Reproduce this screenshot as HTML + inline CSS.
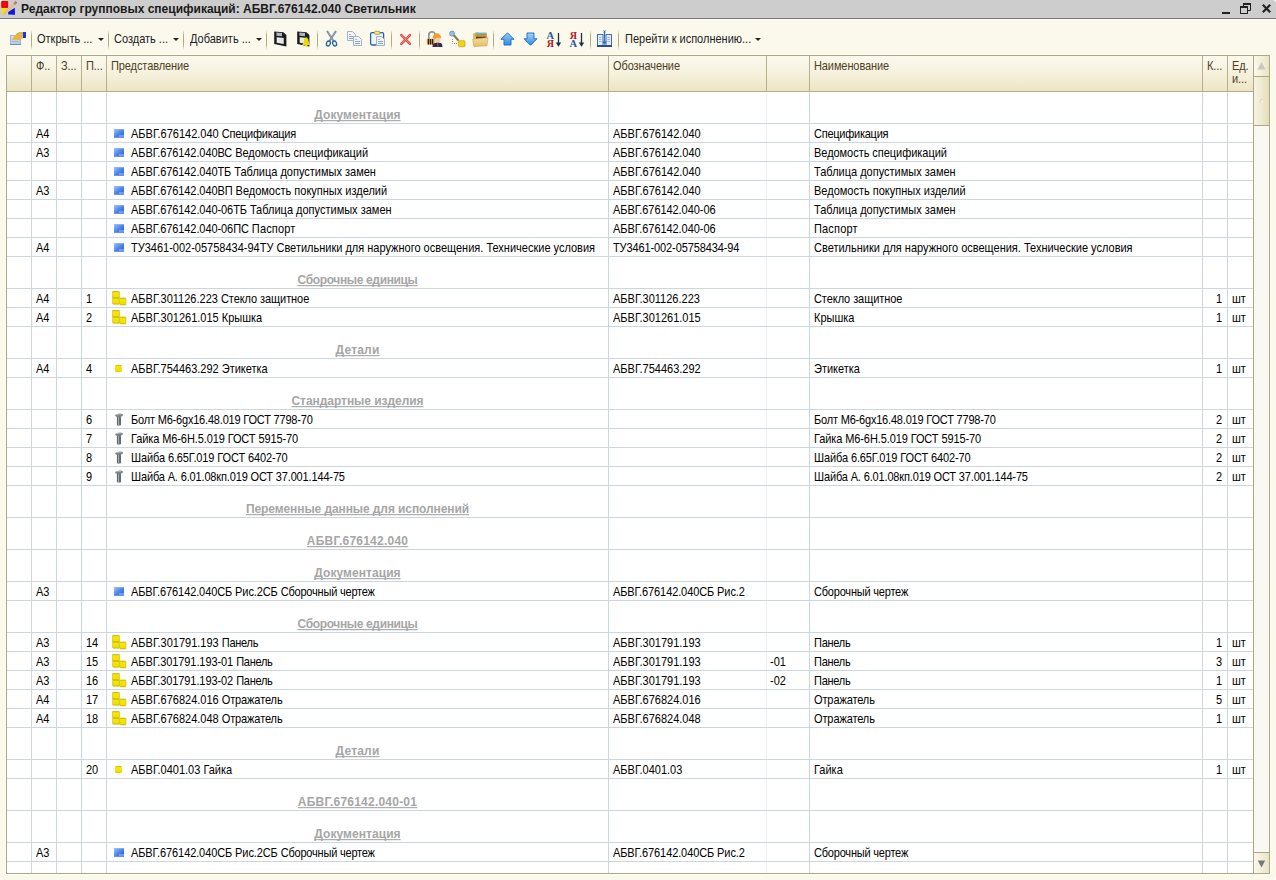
<!DOCTYPE html>
<html lang="ru"><head><meta charset="utf-8"><title>Редактор групповых спецификаций</title>
<style>
html,body{margin:0;padding:0;}
body{width:1276px;height:880px;overflow:hidden;position:relative;background:#fff;font-family:"Liberation Sans",Arial,sans-serif;font-size:11px;color:#000;}
#win{position:absolute;left:0;top:0;width:1276px;height:880px;background:#fbf9ec;border-radius:4px;overflow:hidden;}
#title{position:absolute;left:0;top:0;width:1276px;height:18px;background:#cdcdcd;border-bottom:1px solid #767676;}
#title .t{position:absolute;left:21px;top:2px;font-weight:bold;font-size:12px;line-height:14px;letter-spacing:0;color:#1a1a1a;white-space:nowrap;}
#lt{position:absolute;left:0;top:19px;width:1276px;height:1px;background:#fffef4;}
.tbt{position:absolute;top:33px;font-size:11px;line-height:13px;color:#222;white-space:nowrap;}
.sep{position:absolute;top:30px;width:1px;height:20px;background:linear-gradient(rgba(176,168,128,0),#b5ad86 25%,#b0a880 50%,#b5ad86 75%,rgba(176,168,128,0));}
.arr{position:absolute;top:38px;width:0;height:0;border-left:3px solid transparent;border-right:3px solid transparent;border-top:3px solid #222;}
#grid{position:absolute;left:6px;top:55px;width:1262px;height:817px;background:#fff;border:1px solid #aea784;overflow:hidden;box-shadow:0 0 0 1px #fffef3;}
#hdr{position:absolute;left:0;top:0;width:1246px;height:35px;background:linear-gradient(#fbf9ee 0%,#f6f2df 45%,#ece5c4 100%);border-bottom:1px solid #b6ae89;}
.hc{position:absolute;top:0;height:35px;width:1px;background:#b7b08d;}
.ht{position:absolute;top:4px;letter-spacing:-0.1px;font-size:11px;color:#4d401f;white-space:nowrap;line-height:13px;}
.vl{position:absolute;top:36px;width:1px;height:782px;background:#cdd6dd;}
.hl{position:absolute;left:0;width:1246px;height:1px;background:#cdd6dd;}
.c,.ht,.tbt{transform:scaleY(1.125);transform-origin:0 10px;}
.c{position:absolute;white-space:nowrap;font-size:11px;line-height:13px;color:#000;}
.sec{position:absolute;font-weight:bold;color:#a6a6a6;text-decoration:underline;text-decoration-skip-ink:none;text-underline-offset:0.5px;text-decoration-thickness:1px;transform:scaleY(1.1);transform-origin:0 11px;font-size:12px;line-height:14px;letter-spacing:0.05px;white-space:nowrap;text-align:center;}
.ic{position:absolute;}
#sb{position:absolute;left:1246px;top:0;width:15px;height:817px;background:#f9f8f2;border-left:1px solid #aea784;}
.sbb{position:absolute;left:0;width:15px;background:linear-gradient(90deg,#faf8ec,#f3efd9 50%,#e9e3c4);}
</style></head><body><div id="win">

<div id="title"><svg style="position:absolute;left:0;top:0" width="20" height="18" viewBox="0 0 20 18"><rect x="1.2" y="1" width="7" height="7" rx="0.8" fill="#e80808"/><rect x="1.700" y="8" width="6" height="5.700" fill="#f6de12"/><polygon points="8.200,14.600 8.200,12 14.800,7.800 15,14.800" fill="#0a18e8"/><polygon points="2.300,15.600 3.600,12.600 13.600,3 15.300,4.700 5.200,14.800" fill="#e3bd84"/><polygon points="13.400,3.200 14.600,2 16.300,3.700 15.200,4.900" fill="#8c8c8c"/><polygon points="14.600,2 15.600,1 17.200,2.600 16.300,3.700" fill="#ea4a4a"/></svg><span class="t">Редактор групповых спецификаций: АБВГ.676142.040 Светильник</span>
<svg style="position:absolute;left:1216px;top:0" width="60" height="18" viewBox="1216 0 60 18"><rect x="1222" y="12" width="8" height="2" fill="#222"/><path d="M1243.500 6 V4 H1250.500 V10.500 H1248" fill="none" stroke="#222" stroke-width="1"/><rect x="1243" y="3" width="8" height="2" fill="#222"/><rect x="1240.500" y="7" width="7" height="6.500" fill="none" stroke="#222" stroke-width="1"/><rect x="1240" y="6" width="8" height="2" fill="#222"/><path d="M1262.800 4.800 L1270.200 12.200 M1270.200 4.800 L1262.800 12.200" stroke="#222" stroke-width="2.200"/></svg></div><div id="lt"></div>
<div id="tb">
<span class="tbt" style="left:37px">Открыть ...</span><i class="arr" style="left:98px"></i>
<span class="tbt" style="left:114px">Создать ...</span><i class="arr" style="left:173px"></i>
<span class="tbt" style="left:190px">Добавить ...</span><i class="arr" style="left:256px"></i>
<span class="tbt" style="left:625px">Перейти к исполнению...</span><i class="arr" style="left:755px"></i>
<i class="sep" style="left:31px"></i>
<i class="sep" style="left:108px"></i>
<i class="sep" style="left:183px"></i>
<i class="sep" style="left:266px"></i>
<i class="sep" style="left:317px"></i>
<i class="sep" style="left:391px"></i>
<i class="sep" style="left:419px"></i>
<i class="sep" style="left:493px"></i>
<i class="sep" style="left:590px"></i>
<i class="sep" style="left:618px"></i>
<svg id="tbi" style="position:absolute;left:0;top:0" width="640" height="55" viewBox="0 0 640 55">
<defs>
<linearGradient id="gup" x1="0" y1="0" x2="0" y2="1"><stop offset="0" stop-color="#9ccdf6"/><stop offset="1" stop-color="#2f8ae2"/></linearGradient>
<linearGradient id="gdn" x1="0" y1="0" x2="0" y2="1"><stop offset="0" stop-color="#a6d2f7"/><stop offset="1" stop-color="#2f8ae2"/></linearGradient>
<linearGradient id="gwin" x1="0" y1="0" x2="0" y2="1"><stop offset="0" stop-color="#d7e0f8"/><stop offset="1" stop-color="#b7c6ee"/></linearGradient>
<linearGradient id="gfold" x1="0" y1="0" x2="0" y2="1"><stop offset="0" stop-color="#f6dc9a"/><stop offset="1" stop-color="#e3bd6b"/></linearGradient>
</defs>
<!-- hand / window -->
<rect x="10.5" y="35.5" width="10" height="9" fill="url(#gwin)" stroke="#a3b1d6"/>
<rect x="10" y="44" width="11" height="1" fill="#7d8cab"/>
<rect x="12" y="41" width="7" height="1" fill="#a6b5dd"/>
<path d="M11.700 39.500 L16.500 33.800 L19 32.600 L23 32.400 L23 38 L19.500 40 L17.500 40.300 L16 39.300 L13 40.500 Z" fill="#e6b83a"/>
<path d="M16.500 34 L19 32.800 L22.800 32.600" stroke="#b89a4a" stroke-width="0.700" fill="none"/>
<rect x="23" y="32" width="3" height="6" fill="#1b36e4"/>
<!-- save -->
<g id="flop"><path d="M274.200 31.600 L283.400 32.200 L286.400 34.900 L286.400 46.400 L274.200 43.900 Z" fill="#1c1c1c"/>
<path d="M276.400 32.500 L282 32.900 L282 36.200 L276.400 35.800 Z" fill="#aeb7b7"/>
<path d="M276.700 37.200 L283.700 38 L283.700 44 L276.700 42.700 Z" fill="#eeeeee"/>
<path d="M279 37.500 L279 43.100 M281.300 37.800 L281.300 43.500" stroke="#d4d4d4" stroke-width="0.600"/></g>
<use href="#flop" x="23" y="0"/>
<path d="M305.200 37.800 Q306.200 36.800 307.200 37.800 Q308.800 39 308.800 42 L310.400 45 L302.200 45 L303.700 42 Q303.700 39 305.200 37.800 Z" fill="#e9da0a"/>
<rect x="305" y="45" width="2.500" height="1.500" fill="#e9da0a"/>
<!-- scissors -->
<path d="M327 31 L333.800 41.500 M336 31 L329.200 41.500" stroke="#6a8399" stroke-width="1.900" fill="none"/><path d="M327.300 31.500 L333.300 41 M335.700 31.500 L329.700 41" stroke="#a9bccb" stroke-width="0.600" fill="none"/>
<ellipse cx="328.400" cy="43.500" rx="1.900" ry="2.500" fill="none" stroke="#1f64a6" stroke-width="1.300" transform="rotate(20 328.400 43.500)"/>
<ellipse cx="334.600" cy="43.500" rx="1.900" ry="2.500" fill="none" stroke="#1f64a6" stroke-width="1.300" transform="rotate(-20 334.600 43.500)"/>
<!-- copy -->
<g id="dpage"><path d="M347.500 31.500 L352.500 31.500 L355.500 34.500 L355.500 40.500 L347.500 40.500 Z" fill="#f0f4fc" stroke="#9fb5c6"/>
<path d="M349 36.500 H354 M349 38.500 H354" stroke="#8ea3cc" stroke-width="1"/><rect x="349" y="34" width="2" height="1" fill="#d9a9a0"/></g>
<use href="#dpage" x="6" y="5"/>
<!-- paste -->
<rect x="370.600" y="32.600" width="13" height="12.400" rx="1.500" fill="#f1f4fa" stroke="#2b5ea8" stroke-width="1.300"/>
<rect x="374.500" y="31.300" width="5.400" height="3" rx="1" fill="#f6ea78" stroke="#a48d2e" stroke-width="0.800"/>
<use href="#dpage" x="29" y="5"/>
<!-- delete -->
<path d="M401.300 35.200 L410 43.800 M410 35.200 L401.300 43.800" stroke="#df433d" stroke-width="2.500" stroke-linecap="round"/>
<path d="M401.300 35.200 L410 43.800 M410 35.200 L401.300 43.800" stroke="#f0a09b" stroke-width="0.800" stroke-linecap="round"/>
<!-- lock + person -->
<path d="M428.800 39 V35 a3.200 3.200 0 0 1 6.400 0 V39" fill="none" stroke="#8e949a" stroke-width="1.700"/>
<rect x="426.800" y="38.800" width="7.800" height="5.800" rx="0.800" fill="#d99a34"/>
<path d="M428.500 39 V44.500 M430.500 39 V44.500 M432.500 39 V44.500" stroke="#2a2418" stroke-width="1.200"/>
<path d="M432.600 38.300 a4.300 5 0 0 1 8.600 0 Z" fill="#f0a02c"/>
<ellipse cx="437.700" cy="40.300" rx="2.600" ry="2.600" fill="#f3cda8"/>
<path d="M432.400 47 L433 44 Q435 42.500 437.700 42.800 Q440.600 42.500 442 44 L442.500 47 Z" fill="#27304f"/>
<path d="M437.200 43 H438.400 V46.500 H437.200 Z" fill="#d33"/>
<!-- magnifier + cube -->
<circle cx="452.100" cy="33.600" r="2.500" fill="#8fc0ee" stroke="#6b95c6" stroke-width="0.900"/>
<path d="M454.200 35.800 L458 40" stroke="#857866" stroke-width="2.200" stroke-linecap="round"/>
<path d="M452 39h1v1h-1z M452 41h1v1h-1z M452 43h1v1h-1z M454 43h1v1h-1z M456 43h1v1h-1z" fill="#8c8c8c"/>
<rect x="458.500" y="40.700" width="6.500" height="6" rx="1" fill="#f0d21c" stroke="#cdab0d" stroke-width="0.800"/>
<!-- folder -->
<path d="M473 33.500 L477.500 32 L480 33.500 L487 33 L487 45 L473.500 46 Z" fill="#dcb968"/>
<rect x="475.500" y="32.500" width="11" height="2" fill="#8db3d8"/>
<rect x="475.500" y="33.800" width="11" height="1.700" fill="#6fae5a"/>
<rect x="475.500" y="35.300" width="11" height="1.700" fill="#e8853a"/>
<rect x="476" y="36.800" width="10.500" height="2" fill="#4a3a24"/>
<path d="M472.600 39.200 L488 37.600 L487 45.800 L474 46.600 Z" fill="url(#gfold)" stroke="#c9a55a" stroke-width="0.600"/>
<!-- up / down -->
<path d="M507.500 32.800 L514 39.300 L511 39.300 L511 45 L504 45 L504 39.300 L501 39.300 Z" fill="url(#gup)" stroke="#2573c6" stroke-width="1" stroke-linejoin="round"/>
<path d="M530.500 45.300 L524 38.800 L527 38.800 L527 33 L534 33 L534 38.800 L537 38.800 Z" fill="url(#gdn)" stroke="#2573c6" stroke-width="1" stroke-linejoin="round"/>
<!-- sort -->
<text x="546.500" y="38.700" font-family="Liberation Serif,serif" font-weight="bold" font-size="10.500" fill="#1f5a96">A</text>
<text x="546.800" y="46.900" font-family="Liberation Serif,serif" font-weight="bold" font-size="10" fill="#b3121f">Я</text>
<path d="M558.500 33 V44" stroke="#1f2f47" stroke-width="1.300"/><path d="M555.800 42.500 H561.200 L558.500 46.800 Z" fill="#1f2f47"/>
<text x="569.800" y="38.500" font-family="Liberation Serif,serif" font-weight="bold" font-size="10" fill="#b3121f">Я</text>
<text x="569.500" y="47" font-family="Liberation Serif,serif" font-weight="bold" font-size="10.500" fill="#1f5a96">A</text>
<path d="M581.500 33 V44" stroke="#1f2f47" stroke-width="1.300"/><path d="M578.800 42.500 H584.200 L581.500 46.800 Z" fill="#1f2f47"/>
<!-- columns -->
<rect x="597.500" y="34.500" width="5.500" height="11" fill="#e3ecf8" stroke="#3f6fb3"/>
<rect x="606" y="34.500" width="5.500" height="11" fill="#e3ecf8" stroke="#3f6fb3"/>
<rect x="597" y="45" width="15" height="2" fill="#28508f"/>
<path d="M599 37.500h2.500M599 39.500h2.500M599 41.500h2.500M607.500 37.500h2.500M607.500 39.500h2.500M607.500 41.500h2.500" stroke="#9fb3d3" stroke-width="1"/>
<path d="M604.500 31 V43" stroke="#2f6fc0" stroke-width="1.200"/><path d="M602.300 41.500 H606.700 L604.500 45 Z" fill="#2f6fc0"/>
<path d="M603.300 30.300 L605.700 32.300 M605.700 30.300 L603.300 32.300" stroke="#2f6fc0" stroke-width="0.700"/>
</svg>

</div>
<svg width="0" height="0" style="position:absolute"><defs><linearGradient id="dg" x1="0" y1="0" x2="1" y2="1"><stop offset="0" stop-color="#a4c5f6"/><stop offset="0.5" stop-color="#4c86ea"/><stop offset="1" stop-color="#2560de"/></linearGradient><linearGradient id="yg" x1="0" y1="0" x2="0" y2="1"><stop offset="0" stop-color="#c9b800"/><stop offset="0.22" stop-color="#f6e806"/><stop offset="0.8" stop-color="#f1de02"/><stop offset="1" stop-color="#d9c400"/></linearGradient></defs></svg>
<div id="grid"><div id="hdr">
<div class="hc" style="left:24px"></div>
<div class="ht" style="left:29px">Ф..</div>
<div class="hc" style="left:49px"></div>
<div class="ht" style="left:54px">З...</div>
<div class="hc" style="left:74px"></div>
<div class="ht" style="left:79px">П...</div>
<div class="hc" style="left:99px"></div>
<div class="ht" style="left:104px">Представление</div>
<div class="hc" style="left:601px"></div>
<div class="ht" style="left:606px">Обозначение</div>
<div class="hc" style="left:759px"></div>
<div class="hc" style="left:802px"></div>
<div class="ht" style="left:807px">Наименование</div>
<div class="hc" style="left:1195px"></div>
<div class="ht" style="left:1200px">К...</div>
<div class="hc" style="left:1220px"></div>
<div class="ht" style="left:1225px">Ед.</div>
<div class="ht" style="left:1225px;top:17px">и...</div>
</div>
<i class="vl" style="left:24px"></i>
<i class="vl" style="left:49px"></i>
<i class="vl" style="left:74px"></i>
<i class="vl" style="left:99px"></i>
<i class="vl" style="left:601px"></i>
<i class="vl" style="left:759px;background:#eef0f3"></i>
<i class="vl" style="left:802px"></i>
<i class="vl" style="left:1195px"></i>
<i class="vl" style="left:1220px"></i>
<div class="sec" style="left:100px;width:501px;top:52px;letter-spacing:0.05px">Документация</div>
<i class="hl" style="top:67px"></i>
<div class="c" style="left:29px;top:72px">A4</div>
<svg class="ic" style="left:107px;top:73px" width="11" height="10" viewBox="0 0 11 10"><rect x="0" y="0" width="10" height="9" fill="url(#dg)"/><rect x="0" y="0" width="10" height="1" fill="#8fb6f3" opacity="0.7"/><rect x="5" y="6.500" width="5" height="1" fill="#b9cff6" opacity="0.9"/><rect x="0" y="8" width="10" height="1" fill="#6f9cee" opacity="0.8"/></svg>
<div class="c" style="left:124px;top:72px">АБВГ.676142.040 <span style="letter-spacing:-0.25px">Спецификация</span></div>
<div class="c" style="left:606px;top:72px">АБВГ.676142.040</div>
<div class="c" style="left:807px;top:72px"><span style="letter-spacing:-0.25px">Спецификация</span></div>
<i class="hl" style="top:86px"></i>
<div class="c" style="left:29px;top:91px">A3</div>
<svg class="ic" style="left:107px;top:92px" width="11" height="10" viewBox="0 0 11 10"><rect x="0" y="0" width="10" height="9" fill="url(#dg)"/><rect x="0" y="0" width="10" height="1" fill="#8fb6f3" opacity="0.7"/><rect x="5" y="6.500" width="5" height="1" fill="#b9cff6" opacity="0.9"/><rect x="0" y="8" width="10" height="1" fill="#6f9cee" opacity="0.8"/></svg>
<div class="c" style="left:124px;top:91px"><span style="letter-spacing:-0.08px">АБВГ.676142.040ВС </span><span style="letter-spacing:-0.04px">Ведомость спецификаций</span></div>
<div class="c" style="left:606px;top:91px">АБВГ.676142.040</div>
<div class="c" style="left:807px;top:91px"><span style="letter-spacing:-0.04px">Ведомость спецификаций</span></div>
<i class="hl" style="top:105px"></i>
<svg class="ic" style="left:107px;top:111px" width="11" height="10" viewBox="0 0 11 10"><rect x="0" y="0" width="10" height="9" fill="url(#dg)"/><rect x="0" y="0" width="10" height="1" fill="#8fb6f3" opacity="0.7"/><rect x="5" y="6.500" width="5" height="1" fill="#b9cff6" opacity="0.9"/><rect x="0" y="8" width="10" height="1" fill="#6f9cee" opacity="0.8"/></svg>
<div class="c" style="left:124px;top:110px"><span style="letter-spacing:-0.08px">АБВГ.676142.040ТБ </span>Таблица допустимых замен</div>
<div class="c" style="left:606px;top:110px">АБВГ.676142.040</div>
<div class="c" style="left:807px;top:110px">Таблица допустимых замен</div>
<i class="hl" style="top:124px"></i>
<div class="c" style="left:29px;top:129px">A3</div>
<svg class="ic" style="left:107px;top:130px" width="11" height="10" viewBox="0 0 11 10"><rect x="0" y="0" width="10" height="9" fill="url(#dg)"/><rect x="0" y="0" width="10" height="1" fill="#8fb6f3" opacity="0.7"/><rect x="5" y="6.500" width="5" height="1" fill="#b9cff6" opacity="0.9"/><rect x="0" y="8" width="10" height="1" fill="#6f9cee" opacity="0.8"/></svg>
<div class="c" style="left:124px;top:129px"><span style="letter-spacing:-0.08px">АБВГ.676142.040ВП </span>Ведомость покупных изделий</div>
<div class="c" style="left:606px;top:129px">АБВГ.676142.040</div>
<div class="c" style="left:807px;top:129px">Ведомость покупных изделий</div>
<i class="hl" style="top:143px"></i>
<svg class="ic" style="left:107px;top:149px" width="11" height="10" viewBox="0 0 11 10"><rect x="0" y="0" width="10" height="9" fill="url(#dg)"/><rect x="0" y="0" width="10" height="1" fill="#8fb6f3" opacity="0.7"/><rect x="5" y="6.500" width="5" height="1" fill="#b9cff6" opacity="0.9"/><rect x="0" y="8" width="10" height="1" fill="#6f9cee" opacity="0.8"/></svg>
<div class="c" style="left:124px;top:148px"><span style="letter-spacing:-0.08px">АБВГ.676142.040-06ТБ </span>Таблица допустимых замен</div>
<div class="c" style="left:606px;top:148px"><span style="letter-spacing:-0.06px">АБВГ.676142.040-06</span></div>
<div class="c" style="left:807px;top:148px">Таблица допустимых замен</div>
<i class="hl" style="top:162px"></i>
<svg class="ic" style="left:107px;top:168px" width="11" height="10" viewBox="0 0 11 10"><rect x="0" y="0" width="10" height="9" fill="url(#dg)"/><rect x="0" y="0" width="10" height="1" fill="#8fb6f3" opacity="0.7"/><rect x="5" y="6.500" width="5" height="1" fill="#b9cff6" opacity="0.9"/><rect x="0" y="8" width="10" height="1" fill="#6f9cee" opacity="0.8"/></svg>
<div class="c" style="left:124px;top:167px"><span style="letter-spacing:-0.08px">АБВГ.676142.040-06ПС </span><span style="letter-spacing:0.17px">Паспорт</span></div>
<div class="c" style="left:606px;top:167px"><span style="letter-spacing:-0.06px">АБВГ.676142.040-06</span></div>
<div class="c" style="left:807px;top:167px"><span style="letter-spacing:0.17px">Паспорт</span></div>
<i class="hl" style="top:181px"></i>
<div class="c" style="left:29px;top:186px">A4</div>
<svg class="ic" style="left:107px;top:187px" width="11" height="10" viewBox="0 0 11 10"><rect x="0" y="0" width="10" height="9" fill="url(#dg)"/><rect x="0" y="0" width="10" height="1" fill="#8fb6f3" opacity="0.7"/><rect x="5" y="6.500" width="5" height="1" fill="#b9cff6" opacity="0.9"/><rect x="0" y="8" width="10" height="1" fill="#6f9cee" opacity="0.8"/></svg>
<div class="c" style="left:124px;top:186px">ТУ3461-002-05758434-94ТУ Светильники для наружного освещения. Технические условия</div>
<div class="c" style="left:606px;top:186px"><span style="letter-spacing:-0.11px">ТУ3461-002-05758434-94</span></div>
<div class="c" style="left:807px;top:186px">Светильники для наружного освещения. Технические условия</div>
<i class="hl" style="top:200px"></i>
<div class="sec" style="left:100px;width:501px;top:217px;letter-spacing:-0.35px">Сборочные единицы</div>
<i class="hl" style="top:232px"></i>
<div class="c" style="left:29px;top:237px">A4</div>
<div class="c" style="left:79px;top:237px">1</div>
<svg class="ic" style="left:105px;top:235px" width="15" height="15" viewBox="0 0 15 15"><rect x="0.300" y="0.300" width="7.200" height="6.900" rx="1" fill="url(#yg)" stroke="#c2ae00" stroke-width="0.500"/><rect x="0.600" y="7" width="6.600" height="6.300" rx="0.900" fill="url(#yg)" stroke="#c2ae00" stroke-width="0.500"/><rect x="7.600" y="6.900" width="6.400" height="7" rx="0.900" fill="url(#yg)" stroke="#c2ae00" stroke-width="0.500"/></svg>
<div class="c" style="left:124px;top:237px">АБВГ.301126.223 <span style="letter-spacing:-0.07px">Стекло защитное</span></div>
<div class="c" style="left:606px;top:237px">АБВГ.301126.223</div>
<div class="c" style="left:807px;top:237px"><span style="letter-spacing:-0.07px">Стекло защитное</span></div>
<div class="c" style="left:1196px;width:19px;text-align:right;top:237px">1</div>
<div class="c" style="left:1225px;top:237px">шт</div>
<i class="hl" style="top:251px"></i>
<div class="c" style="left:29px;top:256px">A4</div>
<div class="c" style="left:79px;top:256px">2</div>
<svg class="ic" style="left:105px;top:254px" width="15" height="15" viewBox="0 0 15 15"><rect x="0.300" y="0.300" width="7.200" height="6.900" rx="1" fill="url(#yg)" stroke="#c2ae00" stroke-width="0.500"/><rect x="0.600" y="7" width="6.600" height="6.300" rx="0.900" fill="url(#yg)" stroke="#c2ae00" stroke-width="0.500"/><rect x="7.600" y="6.900" width="6.400" height="7" rx="0.900" fill="url(#yg)" stroke="#c2ae00" stroke-width="0.500"/></svg>
<div class="c" style="left:124px;top:256px">АБВГ.301261.015 Крышка</div>
<div class="c" style="left:606px;top:256px">АБВГ.301261.015</div>
<div class="c" style="left:807px;top:256px">Крышка</div>
<div class="c" style="left:1196px;width:19px;text-align:right;top:256px">1</div>
<div class="c" style="left:1225px;top:256px">шт</div>
<i class="hl" style="top:270px"></i>
<div class="sec" style="left:100px;width:501px;top:287px;letter-spacing:0.20px">Детали</div>
<i class="hl" style="top:302px"></i>
<div class="c" style="left:29px;top:307px">A4</div>
<div class="c" style="left:79px;top:307px">4</div>
<svg class="ic" style="left:108px;top:309px" width="8" height="8" viewBox="0 0 8 8"><rect x="0.100" y="0.100" width="6.800" height="6.800" rx="1.200" fill="url(#yg)"/></svg>
<div class="c" style="left:124px;top:307px">АБВГ.754463.292 Этикетка</div>
<div class="c" style="left:606px;top:307px">АБВГ.754463.292</div>
<div class="c" style="left:807px;top:307px">Этикетка</div>
<div class="c" style="left:1196px;width:19px;text-align:right;top:307px">1</div>
<div class="c" style="left:1225px;top:307px">шт</div>
<i class="hl" style="top:321px"></i>
<div class="sec" style="left:100px;width:501px;top:338px;letter-spacing:-0.05px">Стандартные изделия</div>
<i class="hl" style="top:353px"></i>
<div class="c" style="left:79px;top:358px">6</div>
<svg class="ic" style="left:108px;top:357px" width="9" height="14" viewBox="0 0 9 14"><path d="M0.200 2 Q4 -0.600 7.900 1.200 L7.900 2.400 L5.600 3.900 L2 3.900 L0.200 2.900Z" fill="#7b8387"/><rect x="1.900" y="3.400" width="4.100" height="9.200" rx="1" fill="#626a6e"/><rect x="3.100" y="3.600" width="1" height="8.500" fill="#a9b0b3"/><path d="M1.500 1.800 L6.500 1" stroke="#b9bfc2" stroke-width="0.800"/></svg>
<div class="c" style="left:124px;top:358px"><span style="letter-spacing:-0.19px">Болт М6-6gx16.48.019 ГОСТ 7798-70</span></div>
<div class="c" style="left:807px;top:358px"><span style="letter-spacing:-0.19px">Болт М6-6gx16.48.019 ГОСТ 7798-70</span></div>
<div class="c" style="left:1196px;width:19px;text-align:right;top:358px">2</div>
<div class="c" style="left:1225px;top:358px">шт</div>
<i class="hl" style="top:372px"></i>
<div class="c" style="left:79px;top:377px">7</div>
<svg class="ic" style="left:108px;top:376px" width="9" height="14" viewBox="0 0 9 14"><path d="M0.200 2 Q4 -0.600 7.900 1.200 L7.900 2.400 L5.600 3.900 L2 3.900 L0.200 2.900Z" fill="#7b8387"/><rect x="1.900" y="3.400" width="4.100" height="9.200" rx="1" fill="#626a6e"/><rect x="3.100" y="3.600" width="1" height="8.500" fill="#a9b0b3"/><path d="M1.500 1.800 L6.500 1" stroke="#b9bfc2" stroke-width="0.800"/></svg>
<div class="c" style="left:124px;top:377px"><span style="letter-spacing:-0.10px">Гайка М6-6Н.5.019 ГОСТ 5915-70</span></div>
<div class="c" style="left:807px;top:377px"><span style="letter-spacing:-0.10px">Гайка М6-6Н.5.019 ГОСТ 5915-70</span></div>
<div class="c" style="left:1196px;width:19px;text-align:right;top:377px">2</div>
<div class="c" style="left:1225px;top:377px">шт</div>
<i class="hl" style="top:391px"></i>
<div class="c" style="left:79px;top:396px">8</div>
<svg class="ic" style="left:108px;top:395px" width="9" height="14" viewBox="0 0 9 14"><path d="M0.200 2 Q4 -0.600 7.900 1.200 L7.900 2.400 L5.600 3.900 L2 3.900 L0.200 2.900Z" fill="#7b8387"/><rect x="1.900" y="3.400" width="4.100" height="9.200" rx="1" fill="#626a6e"/><rect x="3.100" y="3.600" width="1" height="8.500" fill="#a9b0b3"/><path d="M1.500 1.800 L6.500 1" stroke="#b9bfc2" stroke-width="0.800"/></svg>
<div class="c" style="left:124px;top:396px"><span style="letter-spacing:-0.11px">Шайба 6.65Г.019 ГОСТ 6402-70</span></div>
<div class="c" style="left:807px;top:396px"><span style="letter-spacing:-0.11px">Шайба 6.65Г.019 ГОСТ 6402-70</span></div>
<div class="c" style="left:1196px;width:19px;text-align:right;top:396px">2</div>
<div class="c" style="left:1225px;top:396px">шт</div>
<i class="hl" style="top:410px"></i>
<div class="c" style="left:79px;top:415px">9</div>
<svg class="ic" style="left:108px;top:414px" width="9" height="14" viewBox="0 0 9 14"><path d="M0.200 2 Q4 -0.600 7.900 1.200 L7.900 2.400 L5.600 3.900 L2 3.900 L0.200 2.900Z" fill="#7b8387"/><rect x="1.900" y="3.400" width="4.100" height="9.200" rx="1" fill="#626a6e"/><rect x="3.100" y="3.600" width="1" height="8.500" fill="#a9b0b3"/><path d="M1.500 1.800 L6.500 1" stroke="#b9bfc2" stroke-width="0.800"/></svg>
<div class="c" style="left:124px;top:415px"><span style="letter-spacing:-0.15px">Шайба А. 6.01.08кп.019 ОСТ 37.001.144-75</span></div>
<div class="c" style="left:807px;top:415px"><span style="letter-spacing:-0.15px">Шайба А. 6.01.08кп.019 ОСТ 37.001.144-75</span></div>
<div class="c" style="left:1196px;width:19px;text-align:right;top:415px">2</div>
<div class="c" style="left:1225px;top:415px">шт</div>
<i class="hl" style="top:429px"></i>
<div class="sec" style="left:100px;width:501px;top:446px;letter-spacing:-0.09px">Переменные данные для исполнений</div>
<i class="hl" style="top:461px"></i>
<div class="sec" style="left:100px;width:501px;top:478px;letter-spacing:0.23px">АБВГ.676142.040</div>
<i class="hl" style="top:493px"></i>
<div class="sec" style="left:100px;width:501px;top:510px;letter-spacing:0.05px">Документация</div>
<i class="hl" style="top:525px"></i>
<div class="c" style="left:29px;top:530px">A3</div>
<svg class="ic" style="left:107px;top:531px" width="11" height="10" viewBox="0 0 11 10"><rect x="0" y="0" width="10" height="9" fill="url(#dg)"/><rect x="0" y="0" width="10" height="1" fill="#8fb6f3" opacity="0.7"/><rect x="5" y="6.500" width="5" height="1" fill="#b9cff6" opacity="0.9"/><rect x="0" y="8" width="10" height="1" fill="#6f9cee" opacity="0.8"/></svg>
<div class="c" style="left:124px;top:530px"><span style="letter-spacing:-0.10px">АБВГ.676142.040СБ Рис.2СБ </span><span style="letter-spacing:-0.20px">Сборочный чертеж</span></div>
<div class="c" style="left:606px;top:530px"><span style="letter-spacing:-0.10px">АБВГ.676142.040СБ Рис.2</span></div>
<div class="c" style="left:807px;top:530px"><span style="letter-spacing:-0.20px">Сборочный чертеж</span></div>
<i class="hl" style="top:544px"></i>
<div class="sec" style="left:100px;width:501px;top:561px;letter-spacing:-0.35px">Сборочные единицы</div>
<i class="hl" style="top:576px"></i>
<div class="c" style="left:29px;top:581px">A3</div>
<div class="c" style="left:79px;top:581px">14</div>
<svg class="ic" style="left:105px;top:579px" width="15" height="15" viewBox="0 0 15 15"><rect x="0.300" y="0.300" width="7.200" height="6.900" rx="1" fill="url(#yg)" stroke="#c2ae00" stroke-width="0.500"/><rect x="0.600" y="7" width="6.600" height="6.300" rx="0.900" fill="url(#yg)" stroke="#c2ae00" stroke-width="0.500"/><rect x="7.600" y="6.900" width="6.400" height="7" rx="0.900" fill="url(#yg)" stroke="#c2ae00" stroke-width="0.500"/></svg>
<div class="c" style="left:124px;top:581px">АБВГ.301791.193 <span style="letter-spacing:-0.26px">Панель</span></div>
<div class="c" style="left:606px;top:581px">АБВГ.301791.193</div>
<div class="c" style="left:807px;top:581px"><span style="letter-spacing:-0.26px">Панель</span></div>
<div class="c" style="left:1196px;width:19px;text-align:right;top:581px">1</div>
<div class="c" style="left:1225px;top:581px">шт</div>
<i class="hl" style="top:595px"></i>
<div class="c" style="left:29px;top:600px">A3</div>
<div class="c" style="left:79px;top:600px">15</div>
<svg class="ic" style="left:105px;top:598px" width="15" height="15" viewBox="0 0 15 15"><rect x="0.300" y="0.300" width="7.200" height="6.900" rx="1" fill="url(#yg)" stroke="#c2ae00" stroke-width="0.500"/><rect x="0.600" y="7" width="6.600" height="6.300" rx="0.900" fill="url(#yg)" stroke="#c2ae00" stroke-width="0.500"/><rect x="7.600" y="6.900" width="6.400" height="7" rx="0.900" fill="url(#yg)" stroke="#c2ae00" stroke-width="0.500"/></svg>
<div class="c" style="left:124px;top:600px"><span style="letter-spacing:-0.08px">АБВГ.301791.193-01 </span><span style="letter-spacing:-0.26px">Панель</span></div>
<div class="c" style="left:606px;top:600px">АБВГ.301791.193</div>
<div class="c" style="left:763px;top:600px">-01</div>
<div class="c" style="left:807px;top:600px"><span style="letter-spacing:-0.26px">Панель</span></div>
<div class="c" style="left:1196px;width:19px;text-align:right;top:600px">3</div>
<div class="c" style="left:1225px;top:600px">шт</div>
<i class="hl" style="top:614px"></i>
<div class="c" style="left:29px;top:619px">A3</div>
<div class="c" style="left:79px;top:619px">16</div>
<svg class="ic" style="left:105px;top:617px" width="15" height="15" viewBox="0 0 15 15"><rect x="0.300" y="0.300" width="7.200" height="6.900" rx="1" fill="url(#yg)" stroke="#c2ae00" stroke-width="0.500"/><rect x="0.600" y="7" width="6.600" height="6.300" rx="0.900" fill="url(#yg)" stroke="#c2ae00" stroke-width="0.500"/><rect x="7.600" y="6.900" width="6.400" height="7" rx="0.900" fill="url(#yg)" stroke="#c2ae00" stroke-width="0.500"/></svg>
<div class="c" style="left:124px;top:619px"><span style="letter-spacing:-0.08px">АБВГ.301791.193-02 </span><span style="letter-spacing:-0.26px">Панель</span></div>
<div class="c" style="left:606px;top:619px">АБВГ.301791.193</div>
<div class="c" style="left:763px;top:619px">-02</div>
<div class="c" style="left:807px;top:619px"><span style="letter-spacing:-0.26px">Панель</span></div>
<div class="c" style="left:1196px;width:19px;text-align:right;top:619px">1</div>
<div class="c" style="left:1225px;top:619px">шт</div>
<i class="hl" style="top:633px"></i>
<div class="c" style="left:29px;top:638px">A4</div>
<div class="c" style="left:79px;top:638px">17</div>
<svg class="ic" style="left:105px;top:636px" width="15" height="15" viewBox="0 0 15 15"><rect x="0.300" y="0.300" width="7.200" height="6.900" rx="1" fill="url(#yg)" stroke="#c2ae00" stroke-width="0.500"/><rect x="0.600" y="7" width="6.600" height="6.300" rx="0.900" fill="url(#yg)" stroke="#c2ae00" stroke-width="0.500"/><rect x="7.600" y="6.900" width="6.400" height="7" rx="0.900" fill="url(#yg)" stroke="#c2ae00" stroke-width="0.500"/></svg>
<div class="c" style="left:124px;top:638px">АБВГ.676824.016 <span style="letter-spacing:-0.11px">Отражатель</span></div>
<div class="c" style="left:606px;top:638px">АБВГ.676824.016</div>
<div class="c" style="left:807px;top:638px"><span style="letter-spacing:-0.11px">Отражатель</span></div>
<div class="c" style="left:1196px;width:19px;text-align:right;top:638px">5</div>
<div class="c" style="left:1225px;top:638px">шт</div>
<i class="hl" style="top:652px"></i>
<div class="c" style="left:29px;top:657px">A4</div>
<div class="c" style="left:79px;top:657px">18</div>
<svg class="ic" style="left:105px;top:655px" width="15" height="15" viewBox="0 0 15 15"><rect x="0.300" y="0.300" width="7.200" height="6.900" rx="1" fill="url(#yg)" stroke="#c2ae00" stroke-width="0.500"/><rect x="0.600" y="7" width="6.600" height="6.300" rx="0.900" fill="url(#yg)" stroke="#c2ae00" stroke-width="0.500"/><rect x="7.600" y="6.900" width="6.400" height="7" rx="0.900" fill="url(#yg)" stroke="#c2ae00" stroke-width="0.500"/></svg>
<div class="c" style="left:124px;top:657px">АБВГ.676824.048 <span style="letter-spacing:-0.11px">Отражатель</span></div>
<div class="c" style="left:606px;top:657px">АБВГ.676824.048</div>
<div class="c" style="left:807px;top:657px"><span style="letter-spacing:-0.11px">Отражатель</span></div>
<div class="c" style="left:1196px;width:19px;text-align:right;top:657px">1</div>
<div class="c" style="left:1225px;top:657px">шт</div>
<i class="hl" style="top:671px"></i>
<div class="sec" style="left:100px;width:501px;top:688px;letter-spacing:0.20px">Детали</div>
<i class="hl" style="top:703px"></i>
<div class="c" style="left:79px;top:708px">20</div>
<svg class="ic" style="left:108px;top:710px" width="8" height="8" viewBox="0 0 8 8"><rect x="0.100" y="0.100" width="6.800" height="6.800" rx="1.200" fill="url(#yg)"/></svg>
<div class="c" style="left:124px;top:708px">АБВГ.0401.03 Гайка</div>
<div class="c" style="left:606px;top:708px">АБВГ.0401.03</div>
<div class="c" style="left:807px;top:708px">Гайка</div>
<div class="c" style="left:1196px;width:19px;text-align:right;top:708px">1</div>
<div class="c" style="left:1225px;top:708px">шт</div>
<i class="hl" style="top:722px"></i>
<div class="sec" style="left:100px;width:501px;top:739px;letter-spacing:0.22px">АБВГ.676142.040-01</div>
<i class="hl" style="top:754px"></i>
<div class="sec" style="left:100px;width:501px;top:771px;letter-spacing:0.05px">Документация</div>
<i class="hl" style="top:786px"></i>
<div class="c" style="left:29px;top:791px">A3</div>
<svg class="ic" style="left:107px;top:792px" width="11" height="10" viewBox="0 0 11 10"><rect x="0" y="0" width="10" height="9" fill="url(#dg)"/><rect x="0" y="0" width="10" height="1" fill="#8fb6f3" opacity="0.7"/><rect x="5" y="6.500" width="5" height="1" fill="#b9cff6" opacity="0.9"/><rect x="0" y="8" width="10" height="1" fill="#6f9cee" opacity="0.8"/></svg>
<div class="c" style="left:124px;top:791px"><span style="letter-spacing:-0.10px">АБВГ.676142.040СБ Рис.2СБ </span><span style="letter-spacing:-0.20px">Сборочный чертеж</span></div>
<div class="c" style="left:606px;top:791px"><span style="letter-spacing:-0.10px">АБВГ.676142.040СБ Рис.2</span></div>
<div class="c" style="left:807px;top:791px"><span style="letter-spacing:-0.20px">Сборочный чертеж</span></div>
<i class="hl" style="top:805px"></i>
<div id="sb"><div class="sbb" style="top:0;height:20px;border-bottom:1px solid #aea784"><svg width="15" height="20"><polygon points="3.500,13.500 11.500,13.500 7.500,6" fill="#c9c7be"/></svg></div><div class="sbb" style="top:21px;height:48px;border-bottom:1px solid #aea784;background:linear-gradient(90deg,#f6f3e2,#efead0 50%,#e4ddb8)"><svg width="15" height="48"><circle cx="7.500" cy="24" r="2" fill="#d9d4ba"/><circle cx="8" cy="24.500" r="1.500" fill="#f4f0dd"/></svg></div><div class="sbb" style="top:796px;height:21px;border-top:1px solid #aea784"><svg width="15" height="21"><polygon points="3.800,7.500 11.200,7.500 7.500,14.500" fill="#77777d"/></svg></div></div>
</div>
</div></body></html>
